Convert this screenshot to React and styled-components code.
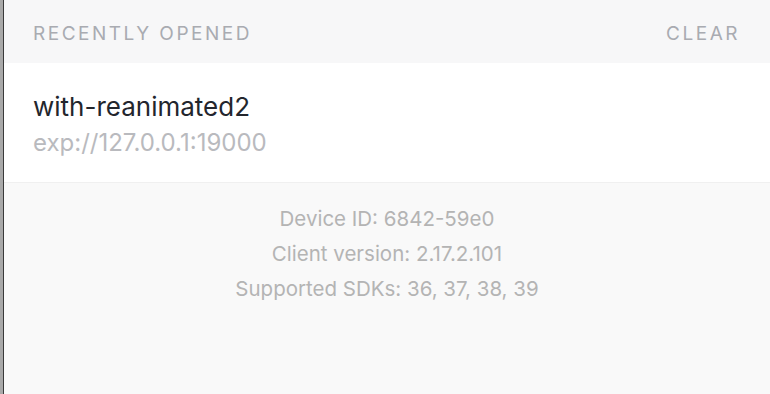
import React from 'react';
import styled, { createGlobalStyle } from 'styled-components';

const GlobalStyle = createGlobalStyle`
  html, body {
    margin: 0;
    padding: 0;
    height: 100%;
    background: #f9f9f9;
  }
  #root {
    height: 100%;
  }
`;

const Frame = styled.div`
  display: flex;
  height: 394px;
  font-family: Inter, "Noto Sans", sans-serif;
`;

const Edge = styled.div`
  width: 3px;
  background: #a9a9a9;
  border-right: 1px solid #3a3a3a;
  flex-shrink: 0;
`;

const Screen = styled.div`
  flex: 1;
  display: flex;
  flex-direction: column;
  background: #f9f9f9;
`;

const SectionHeader = styled.div`
  height: 63px;
  display: flex;
  align-items: center;
  justify-content: space-between;
  padding: 3px 30px 0 29px;
  background: #f7f7f8;
  box-sizing: border-box;
`;

const HeaderLabel = styled.span`
  font-size: 19px;
  letter-spacing: 2.5px;
  color: #a9abb1;
  text-transform: uppercase;
  cursor: ${p => (p.$action ? 'pointer' : 'default')};
`;

const ProjectRow = styled.div`
  height: 120px;
  background: #ffffff;
  padding: 4px 29px 0;
  display: flex;
  flex-direction: column;
  justify-content: center;
  box-sizing: border-box;
  border-bottom: 1px solid #f0f0f0;
`;

const ProjectName = styled.div`
  font-size: 26px;
  color: #23262d;
  line-height: 34px;
`;

const ProjectUrl = styled.div`
  font-size: 24px;
  color: #b9babe;
  line-height: 34px;
  margin-top: 2px;
`;

const Info = styled.div`
  display: flex;
  flex-direction: column;
  align-items: center;
  padding-top: 18px;
`;

const InfoLine = styled.div`
  font-size: 20.5px;
  line-height: 35px;
  color: #b4b4b4;
`;

export default function App() {
  return (
    <>
      <GlobalStyle />
      <Frame>
        <Edge />
        <Screen>
          <SectionHeader>
            <HeaderLabel>Recently opened</HeaderLabel>
            <HeaderLabel $action>Clear</HeaderLabel>
          </SectionHeader>
          <ProjectRow>
            <ProjectName>with-reanimated2</ProjectName>
            <ProjectUrl>exp://127.0.0.1:19000</ProjectUrl>
          </ProjectRow>
          <Info>
            <InfoLine>Device ID: 6842-59e0</InfoLine>
            <InfoLine>Client version: 2.17.2.101</InfoLine>
            <InfoLine>Supported SDKs: 36, 37, 38, 39</InfoLine>
          </Info>
        </Screen>
      </Frame>
    </>
  );
}
